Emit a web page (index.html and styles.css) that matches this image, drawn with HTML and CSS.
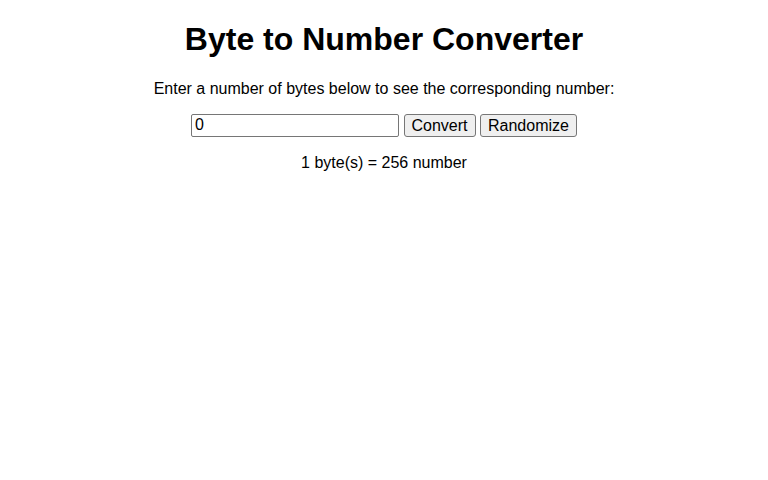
FILE: index.html
```html
<!DOCTYPE html>
<html>
<head>
<meta charset="utf-8">
<title>Byte to Number Converter</title>
<link rel="stylesheet" href="styles.css">
</head>
<body class="page">
<h1 class="title">Byte to Number Converter</h1>
<p class="intro">Enter a number of bytes below to see the corresponding number:</p>
<div class="controls"><input class="bytes-input" type="text" value="0"> <button class="btn">Convert</button> <button class="btn">Randomize</button></div>
<p class="result">1 byte(s) = 256 number</p>
</body>
</html>
```
FILE: styles.css
```css
.page {
  margin: 0 8px;
  font-family: "Liberation Sans", Arial, sans-serif;
  color: #000;
  background: #fff;
  text-align: center;
}
.title {
  font-size: 32px;
  font-weight: bold;
  margin: 21.44px 0;
  line-height: normal;
}
.intro {
  font-size: 16px;
  margin: 16px 0;
}
.controls {
  font-size: 16px;
  line-height: 23px;
  height: 24px;
}
.bytes-input {
  box-sizing: border-box;
  width: 208px;
  height: 23px;
  margin: 0;
  padding: 0 3px;
  font-family: "Liberation Sans", Arial, sans-serif;
  font-size: 16px;
  color: #000;
  border: 1px solid #767676;
  border-radius: 2px;
  background: #fff;
  vertical-align: top;
}
.btn {
  box-sizing: border-box;
  height: 23px;
  margin: 0;
  padding: 0 7px;
  font-family: "Liberation Sans", Arial, sans-serif;
  font-size: 16px;
  color: #000;
  background: #efefef;
  border: 1px solid #767676;
  border-radius: 3px;
  vertical-align: top;
  line-height: 21px;
}
.result {
  font-size: 16px;
  margin: 16px 0;
}
```
